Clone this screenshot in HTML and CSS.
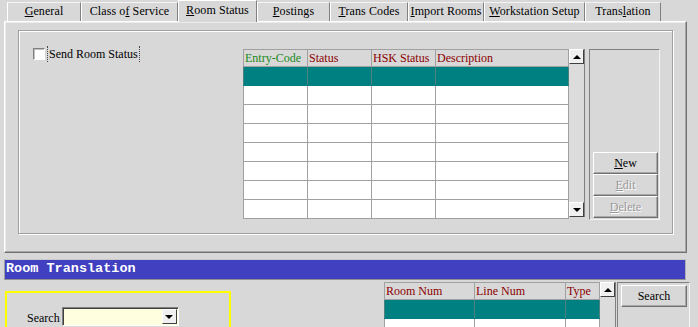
FILE: index.html
```html
<!DOCTYPE html>
<html lang="en">
<head>
    <meta charset="UTF-8">
    <meta name="viewport" content="width=device-width, initial-scale=1.0">
    <title>Room Status</title>
    <link rel="stylesheet" href="styles.css">
</head>
<body>
    <!-- tab strip -->
    <div class="tabs">
        <div class="tab w-general"><u>G</u>eneral</div>
        <div class="tab w-class">Class o<u>f</u> Service</div>
        <div class="tab w-room active"><u>R</u>oom Status</div>
        <div class="tab w-post"><u>P</u>ostings</div>
        <div class="tab w-trans"><u>T</u>rans Codes</div>
        <div class="tab w-import"><u>I</u>mport Rooms</div>
        <div class="tab w-ws"><u>W</u>orkstation Setup</div>
        <div class="tab w-transl">Trans<u>l</u>ation</div>
    </div>

    <div class="panel">
        <div class="group">
            <div class="check-col">
                <label class="check">
                    <span class="check-box"></span>
                    <span class="focus">Send Room Status</span>
                </label>
            </div>

            <table class="grid status-grid">
                <thead>
                    <tr>
                        <th class="green">Entry-Code</th>
                        <th>Status</th>
                        <th>HSK Status</th>
                        <th>Description</th>
                    </tr>
                </thead>
                <tbody>
                    <tr class="selected"><td></td><td></td><td></td><td></td></tr>
                    <tr><td></td><td></td><td></td><td></td></tr>
                    <tr><td></td><td></td><td></td><td></td></tr>
                    <tr><td></td><td></td><td></td><td></td></tr>
                    <tr><td></td><td></td><td></td><td></td></tr>
                    <tr><td></td><td></td><td></td><td></td></tr>
                    <tr><td></td><td></td><td></td><td></td></tr>
                    <tr><td></td><td></td><td></td><td></td></tr>
                </tbody>
            </table>
            <div class="vscroll tall">
                <span class="arrow up"></span>
                <span class="arrow down"></span>
            </div>

            <div class="btn-panel">
                <button class="btn"><u>N</u>ew</button>
                <button class="btn disabled"><u>E</u>dit</button>
                <button class="btn disabled"><u>D</u>elete</button>
            </div>
        </div>
    </div>

    <div class="title-bar">Room Translation</div>

    <div class="bottom">
        <div class="search-box">
            <span class="search-label">Search</span>
            <div class="combo">
                <span class="arrow down"></span>
            </div>
        </div>

        <table class="grid trans-grid">
            <thead>
                <tr>
                    <th class="c-room">Room Num</th>
                    <th class="c-line">Line Num</th>
                    <th>Type</th>
                </tr>
            </thead>
            <tbody>
                <tr class="selected"><td></td><td></td><td></td></tr>
                <tr><td></td><td></td><td></td></tr>
                <tr><td></td><td></td><td></td></tr>
            </tbody>
        </table>
        <div class="vscroll short">
            <span class="arrow up"></span>
        </div>

        <div class="btn-panel side">
            <button class="btn">Search</button>
        </div>
    </div>
</body>
</html>
```

FILE: styles.css
```css
body {
    margin: 0;
    background: #d8d8d8;
    font-family: "Liberation Serif", serif;
    font-size: 12px;
    color: #000;
    height: 327px;
    overflow: hidden;
}

/* tabs */
.tabs {
    display: flex;
    align-items: flex-end;
    height: 21px;
    padding-left: 7px;
    position: relative;
    z-index: 2;
}

.tab {
    box-sizing: border-box;
    height: 19px;
    line-height: 17px;
    text-align: center;
    letter-spacing: 0.1px;
    border-top: 1px solid #f4f4f4;
    border-left: 1px solid #fff;
    border-right: 1px solid #808080;
    white-space: nowrap;
}

.tab.active {
    height: 22px;
    margin-bottom: -1px;
    line-height: 19px;
    background: #d8d8d8;
    border-top-color: #fff;
}

.w-general { width: 74px; }
.w-class { width: 97px; }
.w-room { width: 79px; }
.w-post { width: 73px; }
.w-trans { width: 78px; }
.w-import { width: 76px; }
.w-ws { width: 101px; }
.w-transl { width: 76px; }

/* main tab page */
.panel {
    box-sizing: border-box;
    width: 683px;
    height: 232px;
    margin-left: 4px;
    padding: 8px 0 0 13px;
    border: 1px solid;
    border-color: #fff #707070 #707070 #fff;
    box-shadow: inset -1px -1px 0 #a8a8a8, inset 1px 1px 0 #ececec;
}

.group {
    box-sizing: border-box;
    display: flex;
    align-items: flex-start;
    width: 655px;
    height: 204px;
    border: 1px solid #a0a0a0;
    box-shadow: inset 1px 1px 0 #fff, 1px 1px 0 #fff;
}

.check-col {
    width: 210px;
    padding: 15px 0 0 14px;
}

.check {
    display: flex;
    align-items: center;
}

.check-box {
    box-sizing: border-box;
    width: 12px;
    height: 12px;
    background: #fff;
    border: 1px solid;
    border-color: #808080 #fff #fff #808080;
    box-shadow: inset 1px 1px 0 #c0c0c0;
    margin-right: 2px;
}

.focus {
    padding: 0 1px;
    line-height: 16px;
    border-left: 1px dotted #444;
    border-right: 1px dotted #444;
}

/* grids */
.grid {
    border-collapse: collapse;
    table-layout: fixed;
    background: #fff;
}

.grid th {
    background: #d8d8d8;
    color: #8b0000;
    font-weight: normal;
    text-align: left;
    padding: 0 0 0 1px;
    height: 16px;
    line-height: 14px;
    border: 1px solid #a0a0a0;
    white-space: nowrap;
    overflow: hidden;
}

.grid th.green {
    color: #1a8a1a;
}

.grid td {
    height: 18px;
    padding: 0;
    border: 1px solid #a0a0a0;
}

.grid tr.selected td {
    background: #008080;
    border-top-color: #008080;
    border-bottom-color: #008080;
    border-left-color: #4f8080;
    border-right-color: #4f8080;
}

.status-grid {
    width: 326px;
    margin-top: 18px;
}

.status-grid th:nth-child(1),
.status-grid th:nth-child(2),
.status-grid th:nth-child(3) {
    width: 62px;
}

.vscroll {
    box-sizing: border-box;
    width: 16px;
    display: flex;
    flex-direction: column;
    justify-content: space-between;
    background: #dcdcdc;
    border-right: 1px solid #808080;
}

.vscroll.tall {
    height: 168px;
    margin-top: 18px;
}

.vscroll.short {
    height: 60px;
    margin-top: 2px;
}

.arrow {
    box-sizing: border-box;
    width: 15px;
    height: 15px;
    display: flex;
    align-items: center;
    justify-content: center;
    background: #f0f0f0;
    border: 1px solid;
    border-color: #fff #404040 #404040 #fff;
}

.arrow::before {
    content: "";
    border-left: 4px solid transparent;
    border-right: 4px solid transparent;
}

.arrow.up::before {
    border-bottom: 4px solid #000;
}

.arrow.down::before {
    border-top: 4px solid #000;
}

/* button column */
.btn-panel {
    box-sizing: border-box;
    width: 71px;
    height: 171px;
    margin: 18px 0 0 4px;
    padding: 0 1px 1px 3px;
    display: flex;
    flex-direction: column;
    justify-content: flex-end;
    border: 1px solid;
    border-color: #808080 #f4f4f4 #f4f4f4 #808080;
}

.btn {
    box-sizing: border-box;
    width: 65px;
    height: 22px;
    margin: 0;
    padding: 0;
    font-family: "Liberation Serif", serif;
    font-size: 12px;
    background: #d8d8d8;
    color: #000;
    border: 1px solid;
    border-color: #fff #707070 #707070 #fff;
    box-shadow: inset -1px -1px 0 #a8a8a8;
}

.btn.disabled {
    color: #9a9a9a;
    text-shadow: 1px 1px 0 #fff;
}

/* room translation */
.title-bar {
    box-sizing: border-box;
    width: 682px;
    height: 21px;
    margin: 6px 0 0 4px;
    padding-left: 1px;
    background: #4040c0;
    color: #fff;
    font-family: "Liberation Mono", monospace;
    font-size: 13.5px;
    font-weight: bold;
    line-height: 18px;
    border: 1px solid;
    border-color: #c8c8c8 #b0b0b0 #909090 #a0a0a0;
}

.bottom {
    display: flex;
    align-items: flex-start;
    margin-left: 5px;
}

.search-box {
    box-sizing: border-box;
    width: 226px;
    height: 70px;
    margin-top: 11px;
    padding: 14px 0 0 20px;
    display: flex;
    align-items: flex-start;
    border: 2px solid #ffff00;
}

.search-label {
    margin: 4px 2px 0 0;
}

.combo {
    box-sizing: border-box;
    width: 117px;
    height: 19px;
    display: flex;
    justify-content: flex-end;
    padding: 1px;
    background: #ffffe0;
    border: 1px solid;
    border-color: #808080 #fff #fff #808080;
    box-shadow: inset 1px 1px 0 #404040;
}

.combo .arrow {
    height: 15px;
}

.trans-grid {
    width: 216px;
    margin: 2px 0 0 153px;
}

.trans-grid .c-room { width: 88px; }
.trans-grid .c-line { width: 89px; }

.btn-panel.side {
    width: 73px;
    height: 60px;
    margin: 2px 0 0 1px;
    padding: 2px 0 0 3px;
    justify-content: flex-start;
}

.btn-panel.side .btn {
    width: 66px;
}
```
